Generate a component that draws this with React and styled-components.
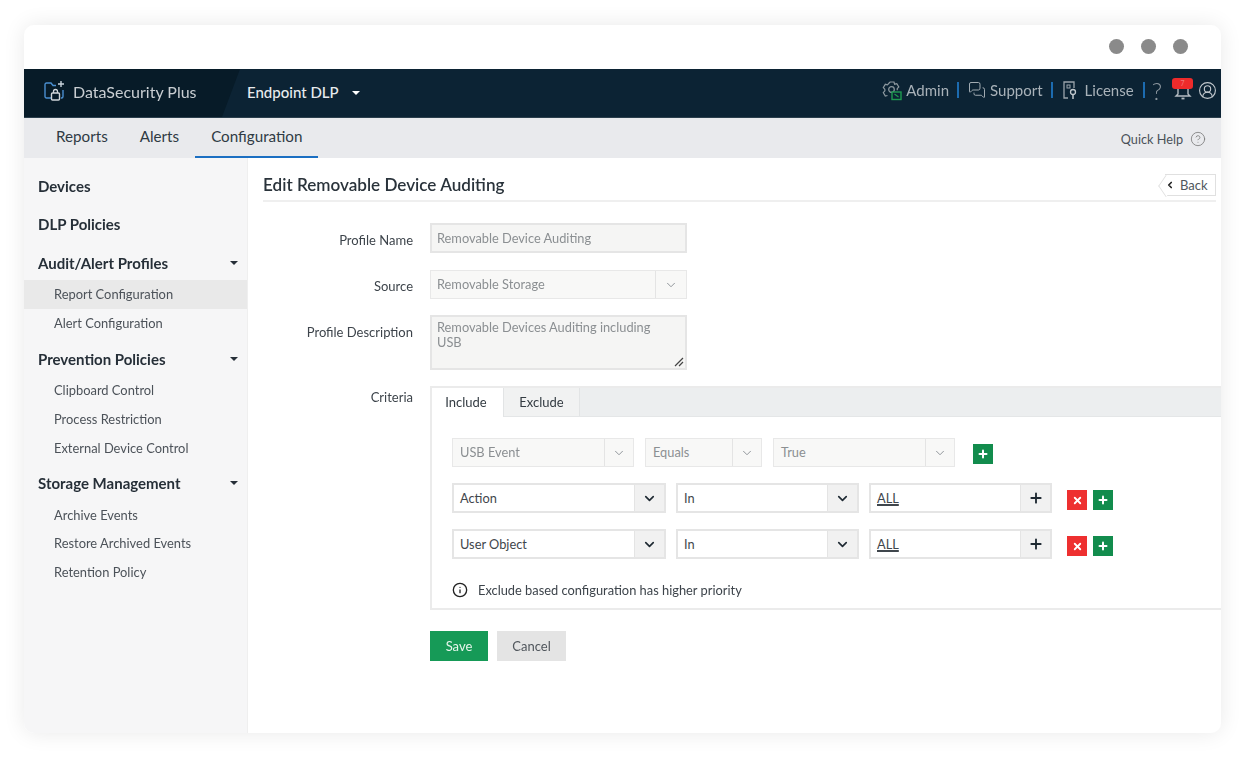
import React from 'react';
import styled, { createGlobalStyle } from 'styled-components';
import { MessagesSquare, CircleUserRound, CircleHelp, Info, ChevronDown, ChevronLeft, Plus, X } from 'lucide-react';

const Global = createGlobalStyle`
  html, body { margin: 0; padding: 0; background: #fff; }
  body { font-family: Lato, "Open Sans", sans-serif; color: #333b42; }
  * { box-sizing: border-box; }
`;

const Page = styled.div`
  width: 1245px;
  height: 757px;
  padding: 25px 24px;
  overflow: hidden;
`;

const Window = styled.div`
  width: 1197px;
  height: 708px;
  background: #fff;
  border-radius: 10px;
  box-shadow: 0 0 22px rgba(0, 0, 0, 0.09);
  display: flex;
  flex-direction: column;
  overflow: hidden;
  filter: blur(0.3px);
`;

const TitleBar = styled.div`
  height: 44px;
  flex: none;
  display: flex;
  justify-content: flex-end;
  align-items: center;
  gap: 17px;
  padding: 0 33px 2px 0;
`;

const Dot = styled.span`
  width: 15px;
  height: 15px;
  border-radius: 50%;
  background: #8a8a8a;
`;

const Header = styled.header`
  height: 49px;
  flex: none;
  background: #0c2334;
  border-bottom: 1px solid #2b3f4d;
  display: flex;
  align-items: center;
`;

const Brand = styled.div`
  width: 216px;
  height: 100%;
  background: #071b28;
  clip-path: polygon(0 0, 100% 0, calc(100% - 18px) 100%, 0 100%);
  display: flex;
  align-items: center;
  padding: 0 0 4px 20px;
  gap: 7px;
  font-size: 16px;
  color: #c9ced2;
`;

const Product = styled.div`
  margin-left: 7px;
  padding-bottom: 3px;
  display: flex;
  align-items: center;
  gap: 13px;
  font-size: 15px;
  font-weight: 500;
  color: #e8ebee;
`;

const Caret = styled.span`
  width: 0;
  height: 0;
  margin-top: ${(p) => p.$top || 0}px;
  border-left: ${(p) => p.$size || 4}px solid transparent;
  border-right: ${(p) => p.$size || 4}px solid transparent;
  border-top: ${(p) => p.$size || 4}px solid ${(p) => p.$color || '#fff'};
`;

const HeaderRight = styled.div`
  margin-left: auto;
  display: flex;
  align-items: center;
  height: 100%;
  padding: 0 4px 6px 0;
  color: #a9b2b9;
  font-size: 15px;
`;

const HeaderLink = styled.span`
  display: flex;
  align-items: center;
  gap: ${(p) => p.$gap || 4}px;
`;

const Divider = styled.span`
  width: 2px;
  height: 16px;
  background: #1c6bb0;
  margin: 0 ${(p) => p.$right || 8}px 0 ${(p) => p.$left || 8}px;
`;

const Question = styled.span`
  font-size: 24px;
  font-weight: 300;
  color: #8d979f;
  margin-right: 10px;
`;

const BellWrap = styled.span`
  position: relative;
  width: 22px;
  height: 22px;
  margin-right: 4px;
`;

const Badge = styled.span`
  position: absolute;
  top: -1px;
  left: 0;
  width: 21px;
  height: 11px;
  border-radius: 3px;
  background: #ee2b2b;
  color: #f07a7a;
  font-size: 7px;
  line-height: 10px;
  text-align: center;
`;

const NavBar = styled.nav`
  height: 40px;
  flex: none;
  background: #e9eaed;
  display: flex;
  align-items: stretch;
  padding: 0 15px 0 16px;
`;

const NavTab = styled.span`
  padding: 0 16px 3px;
  display: flex;
  align-items: center;
  font-size: 15.2px;
  color: #2f3a44;
  border-bottom: 2px solid ${(p) => (p.$active ? '#1b6fc2' : 'transparent')};
`;

const QuickHelp = styled.span`
  margin-left: auto;
  display: flex;
  align-items: center;
  gap: 7px;
  padding-top: 1px;
  font-size: 12.7px;
  color: #4a5158;
`;

const Body = styled.div`
  flex: 1;
  display: flex;
  min-height: 0;
`;

const Sidebar = styled.aside`
  width: 224px;
  flex: none;
  background: #f6f6f7;
  border-right: 1px solid #efefef;
  padding-top: 8.5px;
`;

const SideHead = styled.div`
  height: 38.5px;
  display: flex;
  align-items: center;
  justify-content: space-between;
  padding: 0 9px 0 14px;
  font-size: 15px;
  font-weight: 700;
  color: #262f38;
`;

const SideList = styled.div`
  margin: -2px 0 2px;
`;

const SideItem = styled.div`
  height: 28.7px;
  display: flex;
  align-items: center;
  padding-left: 30px;
  font-size: 12.9px;
  color: #4c5259;
  background: ${(p) => (p.$active ? '#e9e9e9' : 'transparent')};
`;

const Main = styled.main`
  flex: 1;
  min-width: 0;
  padding: 16px 5px 0 15px;
`;

const TitleRow = styled.div`
  height: 28px;
  display: flex;
  align-items: center;
  justify-content: space-between;
  border-bottom: 2px solid #efefef;
  padding-bottom: 6px;
`;

const PageTitle = styled.h1`
  margin: 0;
  font-size: 17.1px;
  font-weight: 600;
  color: #2a333b;
`;

const BackButton = styled.span`
  position: relative;
  align-self: flex-start;
  width: 51px;
  height: 22px;
  display: flex;
  align-items: center;
  gap: 5px;
  font-size: 13px;
  color: #4f565d;
  background: #fff;
  border: 1px solid #e0e0e0;
  border-left: 0;
  &::before {
    content: '';
    position: absolute;
    top: 2.5px;
    left: -7.5px;
    width: 15px;
    height: 15px;
    background: #fff;
    border-left: 1px solid #e0e0e0;
    border-bottom: 1px solid #e0e0e0;
    transform: scaleX(0.68) rotate(45deg);
  }
`;

const BackLabel = styled.span`
  position: relative;
  display: flex;
  align-items: center;
`;

const Form = styled.div`
  display: grid;
  grid-template-columns: 150px 1fr;
  column-gap: 17px;
  margin-right: -5px;
  margin-top: 21px;
`;

const Label = styled.div`
  text-align: right;
  font-size: 13px;
  color: #3d444b;
  padding-top: ${(p) => p.$top || 8}px;
`;

const Cell = styled.div`
  margin-bottom: ${(p) => p.$gap || 17}px;
`;

const Field = styled.div`
  width: ${(p) => p.$w || 257}px;
  height: ${(p) => p.$h || 30}px;
  display: flex;
  flex: none;
  font-size: 12.8px;
  color: ${(p) => (p.$muted ? '#8b8f92' : '#3f464c')};
  background: ${(p) => (p.$fill ? '#f5f5f4' : p.$muted ? '#f8f8f7' : '#fff')};
  border: ${(p) => (p.$muted && !p.$thick ? '1px solid #e8e8e8' : '2px solid #e5e5e5')};
`;

const FieldText = styled.span`
  flex: 1;
  padding: 0 ${(p) => p.$pad || 6}px ${(p) => (p.$lift ? 2 : 0)}px;
  display: flex;
  align-items: center;
  min-width: 0;
`;

const DescText = styled.span`
  flex: 1;
  padding: 3px 20px 3px 5px;
  line-height: 15px;
`;

const Underlined = styled.span`
  text-decoration: underline;
  text-decoration-thickness: 1.5px;
`;

const Addon = styled.span`
  width: ${(p) => p.$w || 29}px;
  flex: none;
  display: flex;
  align-items: center;
  justify-content: center;
  border-left: 1px solid #e4e4e4;
  background: ${(p) => (p.$muted ? 'transparent' : '#f1f1f1')};
  color: ${(p) => (p.$muted ? '#8a8f94' : '#1f2a33')};
`;

const Grip = styled.svg`
  position: absolute;
  right: 1px;
  bottom: 1px;
`;

const Relative = styled.div`
  position: relative;
  display: flex;
  flex: 1;
`;

const CriteriaBox = styled.div`
  height: 224px;
  border: 2px solid #ebebeb;
  border-right: 0;
  display: flex;
  flex-direction: column;
`;

const Tabs = styled.div`
  height: 29px;
  flex: none;
  background: #eceeef;
  display: flex;
  border-bottom: 1px solid #e4e6e7;
`;

const Tab = styled.span`
  width: ${(p) => p.$w}px;
  height: ${(p) => (p.$active ? 29 : 28)}px;
  display: flex;
  align-items: center;
  justify-content: center;
  padding: 0 ${(p) => (p.$active ? 3 : 0)}px ${(p) => (p.$active ? 1 : 0)}px 0;
  font-size: 13px;
  color: #333b42;
  background: ${(p) => (p.$active ? '#fff' : '#f1f2f2')};
  border-right: 1px solid #e2e4e5;
`;

const Rules = styled.div`
  padding: 21px 0 0 20px;
  display: flex;
  flex-direction: column;
  gap: 16px;
`;

const Row = styled.div`
  display: flex;
  align-items: center;
  gap: ${(p) => p.$gap || 10}px;
`;

const IconBtn = styled.span`
  width: 20px;
  height: 20px;
  flex: none;
  display: flex;
  align-items: center;
  justify-content: center;
  background: ${(p) => (p.$red ? '#ee3030' : '#128c4d')};
  color: #fff;
  margin: ${(p) => p.$m || '0'};
`;

const Note = styled.div`
  display: flex;
  align-items: center;
  gap: 10px;
  font-size: 12.85px;
  color: #3d444b;
  margin-top: 7px;
`;

const Actions = styled.div`
  display: flex;
  gap: 9px;
  margin-top: 21px;
`;

const Button = styled.span`
  height: 30px;
  width: ${(p) => p.$w}px;
  display: flex;
  align-items: center;
  justify-content: center;
  padding-bottom: 1px;
  font-size: 13px;
  color: ${(p) => (p.$primary ? '#e7f5ec' : '#50565c')};
  background: ${(p) => (p.$primary ? '#169a57' : '#e4e4e4')};
`;

const LogoIcon = () => (
  <svg width="22" height="22" viewBox="0 0 22 22" fill="none">
    <path d="M7 18H2.500A1.500 1.500 0 0 1 1 16.500V4.500A1.500 1.500 0 0 1 2.500 3H7l2 2.500h3" stroke="#4a8fd0" strokeWidth="1.400" />
    <path d="M19 10v6.500A1.500 1.500 0 0 1 17.500 18H17" stroke="#4a8fd0" strokeWidth="1.400" />
    <path d="M17 1v6M14 4h6" stroke="#c9d3db" strokeWidth="1.400" />
    <rect x="7.500" y="13" width="8" height="7" rx="1" stroke="#d0d5d9" strokeWidth="1.400" />
    <path d="M9.500 13v-1.500a2 2 0 0 1 4 0V13" stroke="#d0d5d9" strokeWidth="1.300" />
  </svg>
);

const AdminIcon = () => (
  <svg width="21" height="21" viewBox="0 0 21 21" fill="none">
    <path
      d="M8 2h4l.6 2.200 2.200-.6 2 3.400-1.600 1.700.1 1.600M5.500 15.500l-2.200.5-2-3.400 1.600-1.700-.1-1.700-1.500-1.500 2-3.400 2.200.6L8 2"
      stroke="#8d989f"
      strokeWidth="1.200"
    />
    <circle cx="9.500" cy="9.500" r="2.800" stroke="#8d989f" strokeWidth="1.200" />
    <rect x="10" y="12" width="9" height="7.500" fill="#0c2334" stroke="#1e9a50" strokeWidth="1.400" />
    <path d="M12.500 14l4 3" stroke="#1e9a50" strokeWidth="1.200" />
  </svg>
);

const LicenseIcon = () => (
  <svg width="18" height="20" viewBox="0 0 18 20" fill="none">
    <path d="M7 18H3V2h10v6" stroke="#9aa4ab" strokeWidth="1.300" />
    <rect x="6" y="5" width="3" height="3" stroke="#9aa4ab" strokeWidth="1" />
    <circle cx="12" cy="12" r="2.500" stroke="#c2c8cd" strokeWidth="1.300" />
    <path d="M12 14.500V19" stroke="#c2c8cd" strokeWidth="1.500" />
  </svg>
);

const BellIcon = () => (
  <svg width="22" height="22" viewBox="0 0 22 22" fill="none">
    <path d="M6 9v6l-2 2h14l-2-2V9" stroke="#b5bcc2" strokeWidth="1.400" />
    <path d="M9.500 19.500h3" stroke="#b5bcc2" strokeWidth="1.800" />
  </svg>
);

const GripIcon = () => (
  <Grip width="11" height="11" viewBox="0 0 11 11">
    <path d="M2 10l8-8M6 10l4-4" stroke="#444" strokeWidth="1.200" />
  </Grip>
);

const sideGroups = [
  { title: 'Devices' },
  { title: 'DLP Policies' },
  {
    title: 'Audit/Alert Profiles',
    caret: true,
    items: [{ label: 'Report Configuration', active: true }, { label: 'Alert Configuration' }],
  },
  {
    title: 'Prevention Policies',
    caret: true,
    items: [{ label: 'Clipboard Control' }, { label: 'Process Restriction' }, { label: 'External Device Control' }],
  },
  {
    title: 'Storage Management',
    caret: true,
    items: [{ label: 'Archive Events' }, { label: 'Restore Archived Events' }, { label: 'Retention Policy' }],
  },
];

const Select = ({ w, muted, children, addon = 29 }) => (
  <Field $w={w} $muted={muted} $h={muted ? 29 : 30}>
    <FieldText $pad={muted ? 7 : 6} $lift={muted}>{children}</FieldText>
    <Addon $w={addon} $muted={muted}>
      <ChevronDown size={muted ? 14 : 15} strokeWidth={muted ? 1.6 : 2.6} />
    </Addon>
  </Field>
);

const RuleRow = ({ name }) => (
  <Row>
    <Select w={214} addon={30}>{name}</Select>
    <Select w={183} addon={30}>In</Select>
    <Field $w={183}>
      <FieldText><Underlined>ALL</Underlined></FieldText>
      <Addon $w={30}><Plus size={16} strokeWidth={2.8} /></Addon>
    </Field>
    <IconBtn $red $m="4px -4px 0 5px"><X size={11} strokeWidth={4} /></IconBtn>
    <IconBtn $m="4px 0 0"><Plus size={12} strokeWidth={4} /></IconBtn>
  </Row>
);

const App = () => (
  <>
    <Global />
    <Page>
      <Window>
        <TitleBar>
          <Dot />
          <Dot />
          <Dot />
        </TitleBar>
        <Header>
          <Brand>
            <LogoIcon />
            DataSecurity Plus
          </Brand>
          <Product>
            Endpoint DLP
            <Caret $size={4.5} $top={2} />
          </Product>
          <HeaderRight>
            <HeaderLink $gap={3}><AdminIcon />Admin</HeaderLink>
            <Divider $right={9} />
            <HeaderLink><MessagesSquare size={18} strokeWidth={1.3} color="#a6afb6" />Support</HeaderLink>
            <Divider />
            <HeaderLink $gap={6}><LicenseIcon />License</HeaderLink>
            <Divider $left={9} $right={7} />
            <Question>?</Question>
            <BellWrap>
              <BellIcon />
              <Badge>7</Badge>
            </BellWrap>
            <CircleUserRound size={19} strokeWidth={1.4} color="#c3c9ce" />
          </HeaderRight>
        </Header>
        <NavBar>
          <NavTab>Reports</NavTab>
          <NavTab>Alerts</NavTab>
          <NavTab $active>Configuration</NavTab>
          <QuickHelp>Quick Help <CircleHelp size={16} strokeWidth={1.2} color="#777" /></QuickHelp>
        </NavBar>
        <Body>
          <Sidebar>
            {sideGroups.map((group) => (
              <div key={group.title}>
                <SideHead>
                  {group.title}
                  {group.caret && <Caret $color="#262f38" />}
                </SideHead>
                {group.items && (
                  <SideList>
                    {group.items.map((item) => (
                      <SideItem key={item.label} $active={item.active}>{item.label}</SideItem>
                    ))}
                  </SideList>
                )}
              </div>
            ))}
          </Sidebar>
          <Main>
            <TitleRow>
              <PageTitle>Edit Removable Device Auditing</PageTitle>
              <BackButton>
                <BackLabel><ChevronLeft size={10} strokeWidth={4} color="#222" /></BackLabel>
                <BackLabel>Back</BackLabel>
              </BackButton>
            </TitleRow>
            <Form>
              <Label $top={9}>Profile Name</Label>
              <Cell>
                <Field $muted $fill $thick><FieldText $pad={5}>Removable Device Auditing</FieldText></Field>
              </Cell>
              <Label $top={8}>Source</Label>
              <Cell $gap={16}>
                <Field $muted $h={29} $w={257}>
                  <FieldText $lift>Removable Storage</FieldText>
                  <Addon $w={31} $muted><ChevronDown size={14} strokeWidth={1.6} /></Addon>
                </Field>
              </Cell>
              <Label $top={9}>Profile Description</Label>
              <Cell $gap={16}>
                <Field $muted $fill $thick $h={55}>
                  <Relative>
                    <DescText>Removable Devices Auditing including USB</DescText>
                    <GripIcon />
                  </Relative>
                </Field>
              </Cell>
              <Label $top={3}>Criteria</Label>
              <CriteriaBox>
                <Tabs>
                  <Tab $active $w={72}>Include</Tab>
                  <Tab $w={76}>Exclude</Tab>
                </Tabs>
                <Rules>
                  <Row $gap={11}>
                    <Select w={182} muted>USB Event</Select>
                    <Select w={117} muted>Equals</Select>
                    <Select w={182} muted>True</Select>
                    <IconBtn $m="2px 0 0 7px"><Plus size={12} strokeWidth={4} /></IconBtn>
                  </Row>
                  <RuleRow name="Action" />
                  <RuleRow name="User Object" />
                  <Note><Info size={16} strokeWidth={2} color="#222" />Exclude based configuration has higher priority</Note>
                </Rules>
              </CriteriaBox>
              <span />
              <Actions>
                <Button $primary $w={58}>Save</Button>
                <Button $w={69}>Cancel</Button>
              </Actions>
            </Form>
          </Main>
        </Body>
      </Window>
    </Page>
  </>
);

export default App;
